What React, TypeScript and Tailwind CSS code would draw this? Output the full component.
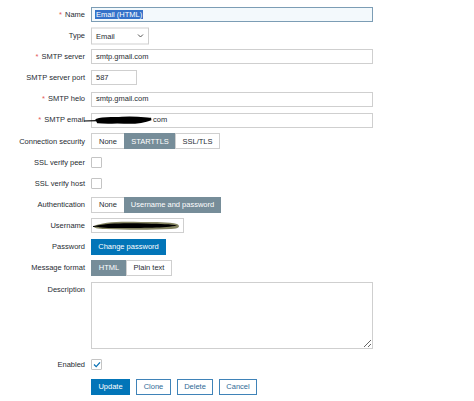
import React from "react";

const Label = ({ text, req, top }: { text: string; req?: boolean; top?: boolean }) => (
  <div className={`flex justify-end text-[#1f2c33] ${top ? "items-start pt-[4px]" : "items-center"} h-full min-h-[15px] whitespace-nowrap`}>
    {req && <span className="text-[#e45959] mr-[3px]">*</span>}
    {text}
  </div>
);

const Input = ({ value, w }: { value: string; w?: string }) => (
  <div className={`h-[15px] ${w ?? "w-[282px]"} border border-[#cfcfcf] bg-white flex items-center px-[4px] text-[#1f2c33]`}>
    {value}
  </div>
);

const Check = ({ checked }: { checked?: boolean }) => (
  <div className="h-[15px] flex items-center">
    <div className="w-[11px] h-[11px] border border-[#c4c4c4] bg-white rounded-[1px] flex items-center justify-center">
      {checked && (
        <svg width="8" height="7" viewBox="0 0 8 7">
          <path d="M1 3.5 L3.2 5.6 L7 1.4" fill="none" stroke="#0b72b5" strokeWidth="1.3" />
        </svg>
      )}
    </div>
  </div>
);

const Seg = ({ items }: { items: { t: string; w: string; on?: boolean }[] }) => (
  <div className="h-[15px] flex items-center">
    <div className="flex h-[16px] shrink-0">
      {items.map((it, i) => (
        <div
          key={i}
          className={`${it.w} h-full flex items-center justify-center ${
            it.on ? "bg-[#768d99] text-white border border-[#768d99]" : "bg-white text-[#1f2c33] border border-[#cfcfcf]"
          } ${i > 0 ? "-ml-px" : ""}`}
        >
          {it.t}
        </div>
      ))}
    </div>
  </div>
);

export default function App() {
  return (
    <div className="w-[474px] h-[401px] bg-white font-['Liberation_Sans',Arial,sans-serif] text-[7.5px] leading-none overflow-hidden">
      <div className="grid grid-cols-[85px_282px] gap-x-[6px] gap-y-[6.15px] pt-[7px]">
        <Label text="Name" req />
        <div className="h-[15px] w-[282px] border border-[#7c9db5] bg-[#f3f9fc] flex items-center px-[3px]">
          <span className="bg-[#3572c9] text-white px-[1px] py-[1px]">Email (HTML)</span>
        </div>

        <Label text="Type" />
        <div className="h-[15px] flex items-center">
          <div className="h-[17px] w-[58px] shrink-0 border border-[#cfcfcf] bg-white flex items-center justify-between px-[4px] text-[#1f2c33] translate-y-[0.5px]">
            <span>Email</span>
            <svg width="7" height="5" viewBox="0 0 7 5">
              <path d="M1 1 L3.5 3.5 L6 1" fill="none" stroke="#555" strokeWidth="1" />
            </svg>
          </div>
        </div>

        <Label text="SMTP server" req />
        <Input value="smtp.gmail.com" />

        <Label text="SMTP server port" />
        <Input value="587" w="w-[46px]" />

        <Label text="SMTP helo" req />
        <Input value="smtp.gmail.com" />

        <Label text="SMTP email" req />
        <div className="relative">
          <div className="h-[15px] w-[282px] border border-[#cfcfcf] bg-white flex items-center pl-[61px] text-[#1f2c33]">
            com
          </div>
          <svg className="absolute left-[-7px] top-0" width="72" height="15" viewBox="0 0 72 15">
            <path d="M0 8 L14 7.6" stroke="#000" strokeWidth="1.2" fill="none" />
            <path d="M13 7 C20 4,30 6,38 5 C48 4,56 5,67 6 C62 8,52 10,40 9.5 C30 9,22 10,14 9 Z" fill="#000" stroke="#000" strokeWidth="2.5" />
          </svg>
        </div>

        <Label text="Connection security" />
        <Seg
          items={[
            { t: "None", w: "w-[34px]" },
            { t: "STARTTLS", w: "w-[52px]", on: true },
            { t: "SSL/TLS", w: "w-[45px]" },
          ]}
        />

        <Label text="SSL verify peer" />
        <Check />

        <Label text="SSL verify host" />
        <Check />

        <Label text="Authentication" />
        <Seg
          items={[
            { t: "None", w: "w-[34px]" },
            { t: "Username and password", w: "w-[97px]", on: true },
          ]}
        />

        <Label text="Username" />
        <div className="relative">
          <div className="h-[15px] w-[93px] border border-[#cfcfcf] bg-white" />
          <svg className="absolute left-0 top-0" width="93" height="15" viewBox="0 0 93 15">
            <path d="M3 8 C10 4,30 3,50 4 C65 4,78 4,86 6 C90 8,88 11,80 11 C60 12,35 12,15 11 C6 11,2 10,3 8 Z" fill="#6f6e45" opacity="0.85" />
            <path d="M5 8 C15 5,35 5,55 5.5 C70 6,80 6,86 7.5 C75 10,50 10,30 10 C18 10,8 10,5 8 Z" fill="#000" />
            <path d="M2 8.5 L20 7" stroke="#000" strokeWidth="1" fill="none" />
          </svg>
        </div>

        <Label text="Password" />
        <div className="h-[15px] flex items-center">
          <div className="h-[16px] w-[75px] shrink-0 bg-[#0275b8] text-white flex items-center justify-center">
            Change password
          </div>
        </div>

        <Label text="Message format" />
        <Seg
          items={[
            { t: "HTML", w: "w-[36px]", on: true },
            { t: "Plain text", w: "w-[46px]" },
          ]}
        />

        <Label text="Description" top />
        <textarea
          className="block w-[282px] h-[67px] border border-[#cfcfcf] bg-white resize-y outline-none"
          defaultValue=""
        />
      </div>

      <div className="grid grid-cols-[85px_282px] gap-x-[6px] gap-y-[7px] mt-[8px]">
        <Label text="Enabled" />
        <Check checked />

        <div />
        <div className="flex gap-[6px] h-[16px]">
          <div className="w-[39px] h-full bg-[#0275b8] text-white flex items-center justify-center">Update</div>
          <div className="w-[35px] h-full bg-white border border-[#3f83b8] text-[#2e6a96] flex items-center justify-center">Clone</div>
          <div className="w-[36px] h-full bg-white border border-[#3f83b8] text-[#2e6a96] flex items-center justify-center">Delete</div>
          <div className="w-[38px] h-full bg-white border border-[#3f83b8] text-[#2e6a96] flex items-center justify-center">Cancel</div>
        </div>
      </div>
    </div>
  );
}
